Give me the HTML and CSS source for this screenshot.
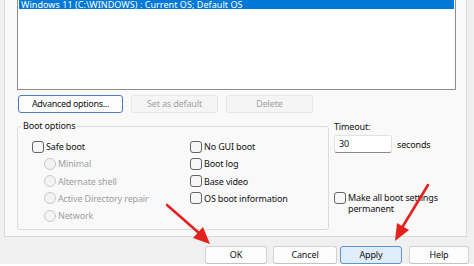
FILE: index.html
```html
<!DOCTYPE html>
<html lang="en">
<head>
<meta charset="utf-8">
<title>System Configuration - Boot</title>
<link rel="stylesheet" href="styles.css">
</head>
<body>
<div class="screen">
  <div class="tabpage">
    <div class="oslist">
      <div class="os-row selected">Windows 11 (C:\WINDOWS) : Current OS; Default OS</div>
    </div>
    <div class="list-actions">
      <button class="btn btn-focused btn-adv">Advanced options...</button>
      <button class="btn btn-disabled btn-def" disabled>Set as default</button>
      <button class="btn btn-disabled btn-del" disabled>Delete</button>
    </div>
    <div class="options">
      <div class="group">
        <span class="group-label">Boot options</span>
        <div class="col col-left">
          <div class="row"><span class="check"></span><span>Safe boot</span></div>
          <div class="row row-sub row-disabled"><span class="radio"></span><span>Minimal</span></div>
          <div class="row row-sub row-disabled"><span class="radio"></span><span>Alternate shell</span></div>
          <div class="row row-sub row-disabled"><span class="radio"></span><span>Active Directory repair</span></div>
          <div class="row row-sub row-disabled"><span class="radio"></span><span>Network</span></div>
        </div>
        <div class="col col-right">
          <div class="row"><span class="check"></span><span>No GUI boot</span></div>
          <div class="row"><span class="check"></span><span>Boot log</span></div>
          <div class="row"><span class="check"></span><span>Base video</span></div>
          <div class="row"><span class="check"></span><span>OS boot information</span></div>
        </div>
      </div>
      <div class="side">
        <div class="timeout-label">Timeout:</div>
        <div class="timeout-row">
          <span class="textbox">30</span>
          <span>seconds</span>
        </div>
        <div class="permanent">
          <span class="check"></span>
          <span class="perm-text">Make all boot settings<br>permanent</span>
        </div>
      </div>
    </div>
  </div>
  <div class="dialog-buttons">
    <button class="btn btn-ok">OK</button>
    <button class="btn btn-cancel">Cancel</button>
    <button class="btn btn-apply">Apply</button>
    <button class="btn btn-help">Help</button>
  </div>
  <div class="bottom-edge"></div>
  <svg class="annotations" width="474" height="266" viewBox="0 0 474 266">
    <line x1="167" y1="205" x2="199" y2="233" stroke="#e3221e" stroke-width="2.6" stroke-linecap="round"/>
    <polygon points="210,244 193,238 203,227" fill="#e3221e"/>
    <line x1="428" y1="185" x2="403" y2="226" stroke="#e3221e" stroke-width="2.6" stroke-linecap="round"/>
    <polygon points="395,241 397,223 409,230" fill="#e3221e"/>
  </svg>
</div>
</body>
</html>
```

FILE: styles.css
```css
html, body {
  margin: 0;
  padding: 0;
}

body {
  width: 474px;
  height: 266px;
  overflow: hidden;
  background: #f0f0f0;
  font-family: "Noto Sans", "Open Sans", sans-serif;
  font-size: 9px;
  letter-spacing: -0.15px;
  color: #111111;
}

.screen {
  position: relative;
  width: 474px;
  height: 266px;
  display: flex;
  flex-direction: column;
}

.tabpage {
  margin-left: 4px;
  width: 463px;
  height: 237px;
  box-sizing: border-box;
  border: 1px solid #dadada;
  border-top: none;
  background: #f9f9f9;
  padding: 0 10px 0 12px;
}

.oslist {
  height: 90px;
  box-sizing: border-box;
  border: 1px solid #8d8d8d;
  border-top: none;
  background: #ffffff;
  padding: 0 1px;
}

.os-row {
  height: 9px;
  line-height: 9px;
  padding-left: 2px;
  letter-spacing: 0.05px;
  white-space: nowrap;
  overflow: hidden;
}

.os-row.selected {
  background: #0078d7;
  color: #ffffff;
}

.btn {
  height: 18px;
  box-sizing: border-box;
  margin: 0;
  padding: 0;
  font: inherit;
  letter-spacing: inherit;
  color: #111111;
  background: #fdfdfd;
  border: 1px solid #d3d3d3;
  border-bottom-color: #c2c2c2;
  border-radius: 3px;
  text-align: center;
  line-height: 16px;
}

.btn-focused {
  border-color: #4d7fc2;
}

.btn-disabled {
  background: #f5f5f5;
  border-color: #e6e6e6;
  color: #a2a2a2;
}

.list-actions {
  display: flex;
  gap: 8px;
  margin-top: 5px;
  padding-left: 1px;
}

.btn-adv { width: 105px; letter-spacing: -0.3px; }
.btn-def { width: 87px; }
.btn-del { width: 87px; }

.options {
  display: flex;
  margin-top: 7px;
}

.group {
  position: relative;
  width: 312px;
  height: 104px;
  margin-top: 6px;
  box-sizing: border-box;
  border: 1px solid #dcdcdc;
  border-radius: 3px;
  display: flex;
  padding: 11px 0 0 14px;
}

.group-label {
  position: absolute;
  top: -7px;
  left: 3px;
  padding: 0 2px;
  background: #f9f9f9;
  line-height: 12px;
}

.col {
  display: flex;
  flex-direction: column;
}

.col-left {
  width: 158px;
}

.row {
  display: flex;
  align-items: center;
  gap: 2px;
  height: 17.25px;
  white-space: nowrap;
}

.row-disabled {
  color: #9f9f9f;
}

.check {
  flex: none;
  width: 12px;
  height: 12px;
  box-sizing: border-box;
  border: 1px solid #666666;
  border-radius: 3px;
  background: #f6f6f6;
}

.radio {
  flex: none;
  width: 12px;
  height: 12px;
  box-sizing: border-box;
  margin-left: 12px;
  border: 1px solid #c9c9c9;
  border-radius: 50%;
  background: #f3f3f3;
}

.side {
  margin-left: 5px;
  display: flex;
  flex-direction: column;
}

.timeout-label {
  line-height: 13px;
}

.timeout-row {
  display: flex;
  align-items: center;
  gap: 5px;
  margin-top: 2px;
}

.textbox {
  width: 58px;
  height: 18px;
  box-sizing: border-box;
  background: #ffffff;
  border: 1px solid #e2e2e2;
  border-bottom-color: #8a8a8a;
  border-radius: 3px;
  padding-left: 4px;
  line-height: 16px;
}

.permanent {
  display: flex;
  align-items: flex-start;
  gap: 2px;
  margin-top: 39px;
  line-height: 11px;
}

.dialog-buttons {
  display: flex;
  margin-top: 9px;
  padding-left: 205px;
}

.btn-ok { width: 62px; }
.btn-cancel { width: 64px; margin-left: 6px; }
.btn-apply {
  width: 62px;
  margin-left: 3px;
  background: #dfecf9;
  border-color: #5e93d1;
}
.btn-help { width: 60px; margin-left: 7px; }

.bottom-edge {
  margin-top: auto;
  height: 2px;
  background: #ffffff;
}

.annotations {
  position: absolute;
  top: 0;
  left: 0;
  pointer-events: none;
}
```
